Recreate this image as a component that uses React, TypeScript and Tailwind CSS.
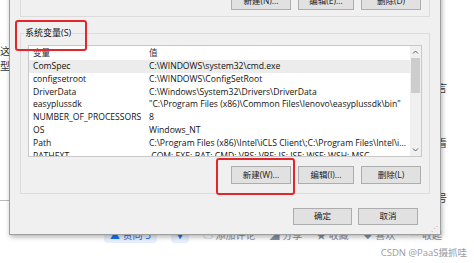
const rows: [string, string][] = [
  ['ComSpec', 'C:\\WINDOWS\\system32\\cmd.exe'],
  ['configsetroot', 'C:\\WINDOWS\\ConfigSetRoot'],
  ['DriverData', 'C:\\Windows\\System32\\Drivers\\DriverData'],
  ['easyplussdk', '"C:\\Program Files (x86)\\Common Files\\lenovo\\easyplussdk\\bin"'],
  ['NUMBER_OF_PROCESSORS', '8'],
  ['OS', 'Windows_NT'],
  ['Path', 'C:\\Program Files (x86)\\Intel\\iCLS Client\\;C:\\Program Files\\Intel\\i...'],
  ['PATHEXT', '.COM;.EXE;.BAT;.CMD;.VBS;.VBE;.JS;.JSE;.WSF;.WSH;.MSC'],
];

const font = "font-['Open_Sans','Noto_Sans_CJK_SC',sans-serif]";

const Btn = ({ label, w }: { label: string; w: string }) => (
  <div
    className={`${w} h-[18px] flex items-center justify-center bg-[#e1e1e1] border border-[#adadad] text-[8.5px] text-[#1a1a1a] whitespace-nowrap`}
  >
    {label}
  </div>
);

export default function App() {
  return (
    <div className={`relative w-[474px] h-[263px] overflow-hidden bg-white ${font}`}>
      {/* page behind the dialog */}
      <div className="absolute left-0 top-[45px] flex flex-col gap-[2px] text-[10px] text-[#333] leading-[13px]">
        <span>这</span>
        <span>型</span>
      </div>
      <div className="absolute left-0 top-[200px] w-[10px] h-px bg-[#bbb]" />
      <div className="absolute left-[104px] top-[227px] flex items-center gap-[14px] text-[10px] leading-[16px] whitespace-nowrap">
        <span className="px-[6px] bg-[#e8f0fd] rounded text-[#1772f6]">▲ 赞同 3</span>
        <span className="px-[4px] bg-[#e8f0fd] rounded text-[#1772f6]">▼</span>
        <span className="text-[#8590a6]">☁ 添加评论</span>
        <span className="text-[#8590a6]">◢ 分享</span>
        <span className="text-[#8590a6]">★ 收藏</span>
        <span className="text-[#8590a6]">♥ 喜欢</span>
        <span className="text-[#8590a6]">⋯ 收起</span>
      </div>
      <div className="absolute left-[437px] top-[26px] flex flex-col gap-[40px] text-[10px] text-[#333]">
        <span>\</span>
        <span>言</span>
        <span>看</span>
        <span>号</span>
      </div>
      <div className="absolute right-[7px] top-[246px] text-[9.5px] text-[#9a9a9a] whitespace-nowrap">
        CSDN @PaaS摄抓哇
      </div>

      {/* dialog window */}
      <div className="absolute left-[9px] top-[-20px] w-[432px] h-[255px] bg-[#f0f0f0] border border-[#9e9e9e] shadow-[1px_2px_5px_rgba(0,0,0,0.3)] flex flex-col px-[10px]">
        {/* user variables group (cut) */}
        <div className="mt-[2px] h-[34px] border border-[#dcdcdc] border-t-0 flex items-end justify-end gap-[7px] pr-[8px] pb-[6px]">
          <Btn label="新建(N)..." w="w-[60px]" />
          <Btn label="编辑(E)..." w="w-[56px]" />
          <Btn label="删除(D)" w="w-[60px]" />
        </div>

        {/* system variables group */}
        <div className="relative mt-[16px] h-[161px] border border-[#dcdcdc] flex flex-col px-[7px]">
          <div className="absolute left-[3px] top-[-8px] px-[1px] bg-[#f0f0f0] text-[9px] leading-[14px] text-[#111]">
            系统变量(S)
          </div>
          <div className="absolute left-[-6px] top-[-14px] w-[72px] h-[31px] border-2 border-[#e2262a] rounded-[3px]" />

          <div className="mt-[11px] h-[112px] bg-white border border-[#c8c8c8] flex overflow-hidden">
            <div className="flex-1 min-w-0 flex flex-col overflow-hidden text-[8.6px] text-[#111]">
              <div className="h-[14px] shrink-0 flex items-center whitespace-nowrap">
                <span className="w-[116px] shrink-0 pl-[4px] text-[#333]">变量</span>
                <span className="shrink-0 pl-[4px] text-[#333]">值</span>
              </div>
              {rows.map(([k, v], i) => (
                <div
                  key={k}
                  className={`h-[12.8px] shrink-0 flex items-center whitespace-nowrap ${i === 0 ? 'bg-[#ececec]' : ''}`}
                >
                  <span className="w-[116px] shrink-0 pl-[4px]">{k}</span>
                  <span className="shrink-0 pl-[4px]">{v}</span>
                </div>
              ))}
            </div>
            <div className="w-[11px] shrink-0 bg-[#f0f0f0] flex flex-col items-center">
              <svg width="7" height="12" viewBox="0 0 7 12" className="shrink-0">
                <path d="M1 7.5 L3.5 5 L6 7.5" stroke="#606060" strokeWidth="1" fill="none" />
              </svg>
              <div className="w-[9px] h-[35px] bg-[#cdcdcd]" />
              <div className="flex-1" />
              <svg width="7" height="12" viewBox="0 0 7 12" className="shrink-0">
                <path d="M1 4.5 L3.5 7 L6 4.5" stroke="#606060" strokeWidth="1" fill="none" />
              </svg>
            </div>
          </div>

          <div className="mt-[9px] flex justify-end gap-[7px] pr-[1px]">
            <div className="relative">
              <Btn label="新建(W)..." w="w-[60px]" />
              <div className="absolute left-[-15px] top-[-8px] w-[79px] h-[37px] border-2 border-[#e2262a] rounded-[3px]" />
            </div>
            <Btn label="编辑(I)..." w="w-[56px]" />
            <Btn label="删除(L)" w="w-[60px]" />
          </div>
        </div>

        <div className="mt-[14px] flex justify-end gap-[6px] pr-[12px]">
          <div className="w-[59px] h-[17px] flex items-center justify-center bg-[#e1e1e1] border border-[#adadad] text-[8.5px] text-[#1a1a1a]">
            确定
          </div>
          <div className="w-[60px] h-[17px] flex items-center justify-center bg-[#e1e1e1] border border-[#adadad] text-[8.5px] text-[#1a1a1a]">
            取消
          </div>
        </div>
        <div className="absolute right-[2px] bottom-[2px] text-[7px] leading-none text-[#aaa]">⋰</div>
      </div>
    </div>
  );
}
